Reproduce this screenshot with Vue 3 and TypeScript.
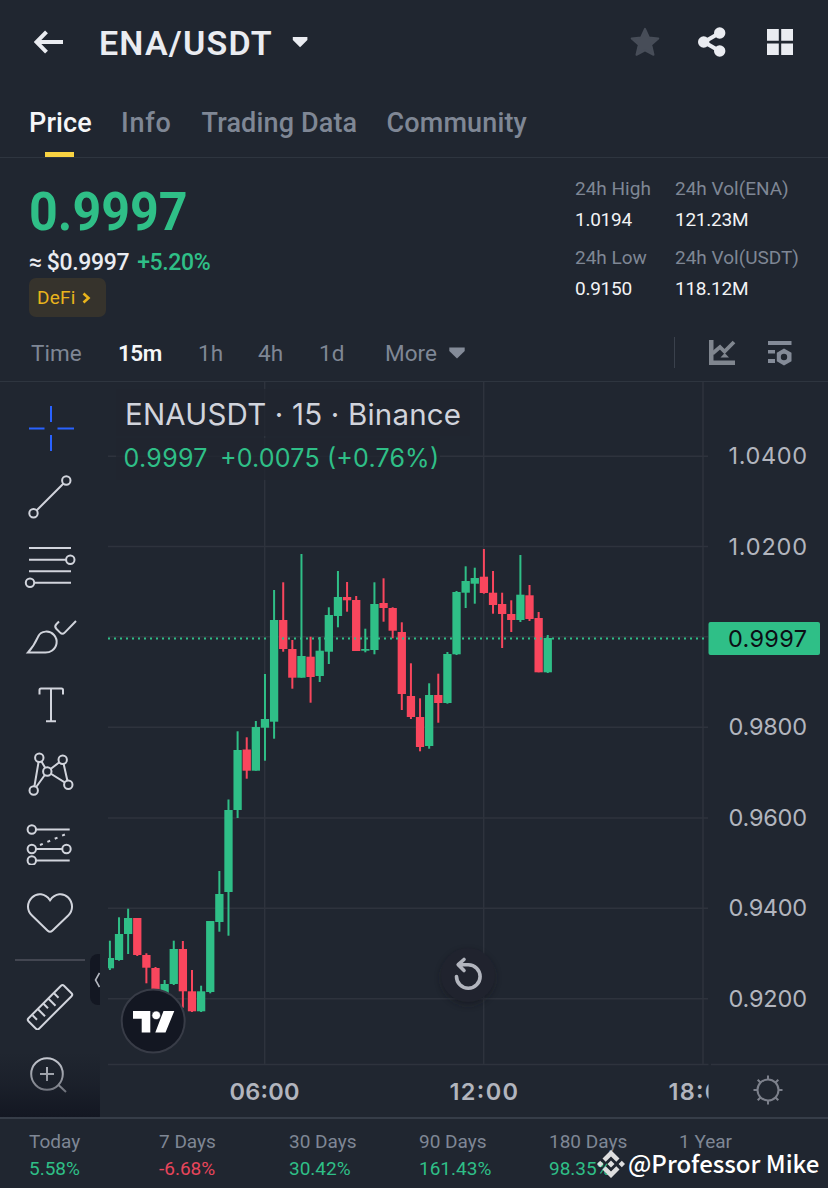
<script setup lang="ts">
type Candle = [up: number, high: number, top: number, bottom: number, low: number]

const tabs = [
  { label: 'Price', cls: 'price' },
  { label: 'Info', cls: 'info' },
  { label: 'Trading Data', cls: 'trading' },
  { label: 'Community', cls: 'community' },
]

const intervals = [
  { label: 'Time', cls: 'time' },
  { label: '15m', cls: 'm15' },
  { label: '1h', cls: 'h1' },
  { label: '4h', cls: 'h4' },
  { label: '1d', cls: 'd1' },
]

const performance = [
  { label: 'Today', value: '5.58%' },
  { label: '7 Days', value: '-6.68%' },
  { label: '30 Days', value: '30.42%' },
  { label: '90 Days', value: '161.43%' },
  { label: '180 Days', value: '98.35%' },
  { label: '1 Year', value: '--' },
]

const gridX = [264.7, 483.7, 703]
const gridY = [456.3, 546.5, 636.7, 727.3, 818, 908.3, 998.7]
const priceLabels = [
  { y: 456, text: '1.0400' },
  { y: 546.5, text: '1.0200' },
  { y: 727.3, text: '0.9800' },
  { y: 818, text: '0.9600' },
  { y: 908.3, text: '0.9400' },
  { y: 998.7, text: '0.9200' },
]

const candles: Candle[] = [
  [1, 940.7, 958, 968.3, 970],
  [1, 917.3, 934, 960, 960.7],
  [1, 908.7, 918, 934, 954],
  [0, 918, 918, 955, 956],
  [0, 953.3, 955, 967.7, 983.3],
  [0, 967, 968, 992, 994],
  [1, 980, 984, 996, 998],
  [1, 940.7, 949, 984, 985],
  [0, 941, 949, 991.3, 1007.7],
  [0, 970, 991.3, 1011.3, 1012],
  [1, 985.7, 991.3, 1011.3, 1012],
  [1, 921, 921, 992, 993.3],
  [1, 871, 894, 922, 931.7],
  [1, 799.5, 810, 892, 935.7],
  [1, 731.3, 750, 810, 818],
  [0, 737.3, 749.5, 770.7, 778.7],
  [1, 721, 727, 770.7, 770.7],
  [1, 674, 719, 727.7, 760.7],
  [1, 590, 620, 721.7, 738.7],
  [0, 582.3, 620, 649, 651.7],
  [0, 640, 649, 677.7, 688.7],
  [1, 554, 656, 677.7, 677.7],
  [0, 636.7, 656.7, 677, 702.7],
  [1, 637, 650.7, 676, 682],
  [1, 607.3, 615, 651.7, 664],
  [1, 571, 597, 616, 627.3],
  [0, 582, 597, 600.3, 611.7],
  [0, 596, 600, 651, 651],
  [1, 628.7, 649, 650.7, 652.3],
  [1, 582.3, 604, 650, 654.3],
  [0, 578.3, 603, 608, 621.7],
  [0, 607.3, 608, 630.7, 638.3],
  [0, 622.3, 632, 694, 710],
  [0, 663.3, 696, 717, 719],
  [0, 698.3, 717, 747, 751.3],
  [1, 683.3, 695, 746, 748.7],
  [0, 673.7, 695, 703, 722.7],
  [1, 652, 654, 703, 703.7],
  [1, 591, 592, 654.3, 655],
  [1, 566.3, 581, 592.7, 608],
  [1, 567.7, 578, 583.7, 603.7],
  [0, 549, 576.7, 593, 593.7],
  [0, 571, 592.7, 605, 613.7],
  [0, 592.7, 604, 614, 648],
  [0, 600.3, 614, 620, 632],
  [1, 555, 594.7, 620, 622],
  [0, 585, 595.3, 619, 621],
  [0, 612, 618, 672.3, 672.3],
  [1, 635, 638, 672.3, 673],
]

const candleX = (i: number): number => 109.9 + i * 9.122
</script>

<template>
  <div class="screen">
    <header class="header">
      <svg class="back" viewBox="0 0 30 24" width="30" height="24">
        <path d="M12.500 1.800 2.500 12l10 10.200M2.500 12H29" fill="none" stroke="#eaecf1" stroke-width="4" />
      </svg>
      <h1 class="title">ENA/USDT</h1>
      <svg class="title-caret" viewBox="0 0 16 12" width="16" height="12">
        <path d="M.8 1h14.600v3L8.100 11.200.8 4z" fill="#eaecf1" />
      </svg>
      <div class="actions">
        <svg viewBox="0 0 30 30" width="30" height="30">
          <path d="M15 1.800l3.900 8.600 9.400 1-7.100 6.300 2.300 10.100L15 23.400 6.500 27.800l2.300-10.100-7.100-6.300 9.400-1z" fill="#474d58" stroke="#474d58" stroke-width="2" stroke-linejoin="round" />
        </svg>
        <svg class="share" viewBox="0 0 30 30" width="30" height="30">
          <path d="M22.500 6 7 15l15.500 9" fill="none" stroke="#eaecf1" stroke-width="4" />
          <circle cx="22.700" cy="6" r="5.700" fill="#eaecf1" />
          <circle cx="6.700" cy="15" r="5.700" fill="#eaecf1" />
          <circle cx="22.700" cy="24" r="5.700" fill="#eaecf1" />
        </svg>
        <svg viewBox="0 0 28 28" width="28" height="28">
          <path d="M1 1h11.800v11.800H1zM15.200 1H27v11.800H15.200zM1 15.500h11.800V27H1zM15.200 15.500H27V27H15.200z" fill="#eaecf1" />
        </svg>
      </div>
    </header>

    <nav class="tabs">
      <span v-for="(t, i) in tabs" :key="t.label" class="tab" :class="[t.cls, { active: i === 0 }]">{{ t.label }}</span>
    </nav>

    <section class="ticker">
      <div class="quote">
        <div class="last">0.9997</div>
        <div class="approx"><span>≈</span><span class="usd">$0.9997</span><span class="change">+5.20%</span></div>
        <div class="tag">
          <span>DeFi</span>
          <svg viewBox="0 0 9 12" width="9" height="12"><path d="M1.500 1.500 6.500 6l-5 4.500" fill="none" stroke="#e9b41c" stroke-width="2.600" /></svg>
        </div>
      </div>
      <dl class="stats">
        <div class="stat"><dt>24h High</dt><dd>1.0194</dd></div>
        <div class="stat"><dt>24h Vol(ENA)</dt><dd>121.23M</dd></div>
        <div class="stat"><dt>24h Low</dt><dd>0.9150</dd></div>
        <div class="stat"><dt>24h Vol(USDT)</dt><dd>118.12M</dd></div>
      </dl>
    </section>

    <nav class="intervals">
      <span v-for="(t, i) in intervals" :key="t.label" class="interval" :class="[t.cls, { active: i === 1 }]">{{ t.label }}</span>
      <span class="interval more">More</span>
      <svg class="more-caret" viewBox="0 0 16 12" width="16" height="12">
        <path d="M.3.5h15.400v3.500L8 11.500.3 4z" fill="#848b98" />
      </svg>
      <i class="divider"></i>
      <svg class="ind" viewBox="0 0 28 28" width="28" height="28">
        <path d="M1 1h4.500v20.500H27V26H1z" fill="#80868f" />
        <path d="M4.500 14.500 12 8l4.500 4.500 9.500-9.500" fill="none" stroke="#80868f" stroke-width="3.800" />
        <path d="M12.500 18.500h8.500L16.700 14z" fill="#80868f" />
      </svg>
      <svg class="cfg" viewBox="0 0 26 26" width="26" height="26">
        <path d="M1 1h23.500v4H1zM1 10h7v3.500H1zM1 19h7v4H1z" fill="#848b98" />
        <path fill-rule="evenodd" d="M17 8.500l7.500 4.200v8.600L17 25.500l-7.200-4.200v-8.600zM17 13.800a3.200 3.200 0 1 0 0 6.400 3.200 3.200 0 0 0 0-6.400z" fill="#848b98" />
      </svg>
    </nav>

    <main class="chart">
      <aside class="tools">
        <svg viewBox="0 0 100 69" width="100" height="69" class="blue">
          <path d="M51 24v16M51 53v16M29 46.500h15.500M57.500 46.500H74" />
        </svg>
        <svg viewBox="0 0 100 69" width="100" height="69">
          <path d="M36.500 59.500 63.500 32.500" />
          <circle cx="33.500" cy="62.200" r="4.200" /><circle cx="66.300" cy="29.500" r="4.200" />
        </svg>
        <svg viewBox="0 0 100 69" width="100" height="69">
          <path d="M29 28h42M29 39.700h37M29 51.200h42M34 62.700h37" />
          <circle cx="70.300" cy="39.700" r="4.200" /><circle cx="30" cy="62.700" r="4.200" />
        </svg>
        <svg viewBox="0 0 100 69" width="100" height="69">
          <path d="M28 63.500C34 57 35.500 53.500 38.200 47.500 41 41.500 49.500 41 54 46c4.500 5.200 3 12.200-2.200 15.800-1.800 1.200-4 1.700-6.300 1.700z" />
          <path d="M59 32.500l-2.700 2.700c-1.200 1.300-1.200 3.300 0 4.600l3.800 3.800c1.300 1.300 3.300 1.300 4.600 0L76 32" />
        </svg>
        <svg viewBox="0 0 100 69" width="100" height="69">
          <path d="M51 31v32M46 63.300h10M39.500 36.500V32q0-1.500 1.500-1.500h20.500q1.500 0 1.500 1.500v4.500" />
        </svg>
        <svg viewBox="0 0 100 69" width="100" height="69" class="nodes">
          <path d="M39.300 30.700 33.700 63.500 47.300 44.500zM47.300 44.500 62.700 32.700 68.300 57.700z" />
          <circle cx="39.300" cy="30.700" r="4.200" /><circle cx="62.700" cy="32.700" r="4.200" /><circle cx="47.300" cy="44.500" r="4.200" /><circle cx="33.700" cy="63.500" r="4.200" /><circle cx="68.300" cy="57.700" r="4.200" />
        </svg>
        <svg viewBox="0 0 100 69" width="100" height="69">
          <path d="M36 33.500h33.700M36 53h26M36 64.500h33.700" />
          <path d="M40 49 66 38" stroke-dasharray="3 5" />
          <circle cx="31.800" cy="33.500" r="4.200" /><circle cx="31.800" cy="53" r="4.200" /><circle cx="31.800" cy="64.500" r="4.200" /><circle cx="66.500" cy="53" r="4.200" />
        </svg>
        <svg viewBox="0 0 100 69" width="100" height="69">
          <path d="M50 35.300c-5-7.300-13-7.600-18-2.800-5.500 5.500-5.200 13 0 18l15.700 15.200q2.300 2.200 4.600 0L68.200 50.500c5-5 5.200-12.500 0-18-5-4.800-13-4.500-18.200 2.800z" />
        </svg>
        <hr class="tool-line" />
        <svg viewBox="0 0 100 69" width="100" height="69">
          <path d="M61 24.700q1.500-1.500 3 0l7.500 7.500q1.500 1.500 0 3L39 67.700q-1.500 1.500-3 0L28.500 60.200q-1.500-1.500 0-3z" />
          <path d="M32.500 54.200l4.500 4.500M38 48.200l7 7M43.500 42.700l4.500 4.500M48.500 37.700l7 7M54 32.200l4.500 4.500" />
        </svg>
        <svg viewBox="0 0 100 69" width="100" height="69">
          <circle cx="47" cy="44" r="15.800" /><path d="M40 44h14M47 37v14M58.500 55l7.500 7" />
        </svg>
        <div class="fade"></div>
        <div class="collapse">
          <svg viewBox="0 0 10 16" width="10" height="16"><path d="M9.500 1 5.500 8l4 7" /></svg>
        </div>
      </aside>

      <svg class="plot" viewBox="100 382 728 735" width="728" height="735">
        <defs>
          <clipPath id="pane"><rect x="108" y="382" width="600.500" height="735" /></clipPath>
          <filter id="soft" x="-40%" y="-40%" width="180%" height="180%"><feGaussianBlur stdDeviation="3" /></filter>
        </defs>
        <g class="grid">
          <path v-for="x in gridX" :key="x" :d="`M${x} 382V1064`" />
          <path v-for="y in gridY" :key="y" :d="`M108 ${y}H708`" />
          <path d="M108 1064.500H708.500M711 1064.500H828" />
        </g>
        <rect x="116" y="389" width="354" height="47" class="legend-bg" />
        <rect x="116" y="438" width="324" height="42" class="legend-bg" />
        <g clip-path="url(#pane)">
          <g v-for="(c, i) in candles" :key="i" :class="c[0] ? 'up' : 'down'">
            <rect :x="candleX(i) - 1" :y="c[1]" width="2" :height="c[4] - c[1]" />
            <rect :x="candleX(i) - 4.150" :y="c[2]" width="8.300" :height="c[3] - c[2]" />
          </g>
          <path class="last-line" d="M108 638.500H708" />
        </g>
        <text class="sym" x="125" y="425" textLength="336">ENAUSDT · 15 · Binance</text>
        <text class="chg" x="123.500" y="466.500" textLength="84">0.9997</text>
        <text class="chg" x="220" y="466.500" textLength="219">+0.0075 (+0.76%)</text>

        <text v-for="p in priceLabels" :key="p.text" class="axis" x="728.500" :y="p.y + 8" textLength="78.500">{{ p.text }}</text>
        <rect x="708.500" y="622" width="111.500" height="33" rx="2" class="tag-bg" />
        <text class="axis dark" x="728" y="647" textLength="79">0.9997</text>

        <g clip-path="url(#pane)">
          <text class="hour" x="229.500" y="1100" textLength="70">06:00</text>
          <text class="hour" x="449.500" y="1100" textLength="68.500">12:00</text>
          <text class="hour" x="668.500" y="1100" textLength="68.500">18:00</text>
        </g>

        <g class="sun">
          <circle cx="768" cy="1090" r="10.500" />
          <path d="M768 1075.500v4M768 1100.500v4M753.500 1090h4M778.500 1090h4M757.700 1079.700l3 3M775.300 1097.300l3 3M757.700 1100.300l3-3M775.300 1082.700l3-3" />
        </g>

        <circle cx="468" cy="978" r="27" fill="#12151d" opacity=".5" filter="url(#soft)" />
        <circle cx="468" cy="975" r="27" fill="#20232e" />
        <path class="reset" d="M456.500 976.500a11.800 11.800 0 1 0 11.800-11.800h-9M464 959.500l-5.800 5.200 5.800 5.800" />

        <circle cx="153.200" cy="1021" r="31.500" fill="#131722" stroke="#383c47" stroke-width="2" />
        <path d="M133 1011h17.300v21.500h-8.600v-13.700H133zM163.500 1011h10.800l-8.800 21.500h-10.200z" fill="#fff" />
        <circle cx="156.200" cy="1015.300" r="4.300" fill="#fff" stroke="#131722" stroke-width=".6" />
      </svg>
    </main>

    <footer class="perf">
      <div v-for="p in performance" :key="p.label" class="perf-item">
        <span class="perf-label">{{ p.label }}</span>
        <span class="perf-value" :class="{ neg: p.value.startsWith('-6'), none: p.value === '--' }">{{ p.value }}</span>
      </div>
    </footer>

    <div class="credit">
      <svg viewBox="0 0 28 28" width="28" height="28">
        <path d="M14 0l8.500 8.500-3.200 3.200L14 6.400l-5.300 5.300-3.200-3.200zM3.200 10.800 6.400 14l-3.200 3.200L0 14zM24.800 10.800 28 14l-3.200 3.200-3.200-3.200zM14 10.500l3.500 3.500-3.500 3.500-3.500-3.500zM14 28l-8.500-8.500 3.200-3.200L14 21.600l5.300-5.300 3.200 3.200z" fill="#dedede" />
      </svg>
      <span>@Professor Mike</span>
    </div>
  </div>
</template>

<style>
html,
body {
  background: #202630;
}
</style>

<style scoped>
.screen {
  position: relative;
  width: 828px;
  height: 1188px;
  overflow: hidden;
  background: #202630;
  color: #eaecf1;
  font-family: Roboto, 'Liberation Sans', sans-serif;
  white-space: nowrap;
}
.screen svg {
  display: block;
  flex: none;
}
.header {
  height: 87px;
  display: flex;
  align-items: center;
  padding: 0 34px 2px 34px;
  box-sizing: border-box;
}
.back {
  margin-top: -1px;
}
.title {
  margin: 0 0 0 35px;
  width: 174px;
  font-size: 34px;
  font-weight: 600;
  letter-spacing: 1.2px;
}
.title-caret {
  margin: -2px 0 0 18.500px;
}
.actions {
  margin: -1px 0 0 auto;
  display: flex;
  align-items: center;
  gap: 36.500px;
}
.share {
  margin-right: 3px;
}
.tabs {
  height: 71px;
  box-sizing: border-box;
  border-bottom: 1px solid #2e353f;
  display: flex;
  padding-left: 29px;
  gap: 30px;
  line-height: 72px;
  font-size: 27px;
  font-weight: 500;
  color: #7f8795;
}
.tab {
  position: relative;
  letter-spacing: 0.15px;
}
.tab.active {
  color: #f5f6f8;
}
.tab.active::after {
  content: '';
  position: absolute;
  left: 16px;
  bottom: 0;
  width: 29px;
  height: 5px;
  background: #f9d342;
}
.price { width: 62px; }
.info { width: 50.500px; }
.tab.info { letter-spacing: 0.8px; }
.trading { width: 155px; }
.ticker {
  height: 168px;
  display: flex;
  justify-content: space-between;
  box-sizing: border-box;
  padding: 15px 29px 0 29px;
}
.quote {
  padding-top: 9px;
}
.last {
  font-size: 54px;
  line-height: 60px;
  font-weight: 700;
  color: #2fbf87;
  transform: scaleX(0.93);
  transform-origin: 0 50%;
}
.approx {
  display: flex;
  margin-top: 5px;
  line-height: 31px;
  font-size: 23px;
  font-weight: 500;
  letter-spacing: -0.350px;
}
.usd {
  margin-left: 5px;
}
.change {
  margin-left: 8px;
  color: #2fbf87;
}
.tag {
  width: 77px;
  height: 39px;
  box-sizing: border-box;
  padding-left: 8px;
  display: flex;
  align-items: center;
  gap: 7px;
  border-radius: 7px;
  background: #36332c;
  color: #e9b41c;
  font-size: 19px;
  letter-spacing: 0.200px;
}
.stats {
  margin: 0;
  display: grid;
  grid-template-columns: 100px 124px;
  align-content: start;
  row-gap: 7px;
  font-size: 19px;
  line-height: 31px;
}
.stat dt {
  color: #7f8795;
}
.stat dd {
  margin: 0;
  color: #f2f3f5;
  letter-spacing: -0.250px;
}
.intervals {
  height: 56px;
  box-sizing: border-box;
  border-bottom: 1px solid #2e353f;
  display: flex;
  align-items: center;
  padding: 0 0 2px 31px;
  font-size: 22.500px;
  color: #7f8795;
}
.interval.active {
  color: #f5f6f8;
  font-weight: 600;
  letter-spacing: -0.500px;
}
.time { width: 87px; }
.m15 { width: 80px; }
.h1 { width: 60px; }
.h4 { width: 61px; }
.d1 { width: 66px; }
.more { width: 64px; }
.divider {
  width: 1px;
  height: 31px;
  margin-left: 209px;
  background: #3a414c;
}
.ind {
  margin-left: 33px;
}
.cfg {
  margin-left: 31px;
}
.chart {
  height: 735px;
  display: flex;
  border-bottom: 2px solid #363d48;
}
.tools {
  position: relative;
  width: 100px;
  display: flex;
  flex-direction: column;
}
.tools > svg {
  fill: none;
  stroke: #d1d4dc;
  stroke-width: 2;
}
.tools > svg.blue {
  stroke: #2962ff;
}
.nodes circle {
  fill: #202630;
}
.tool-line {
  margin: 25px 15px 0 15px;
  border: 0;
  height: 2px;
  background: #434651;
}
.fade {
  position: absolute;
  left: 0;
  bottom: 0;
  width: 100px;
  height: 64px;
  background: linear-gradient(rgba(19, 23, 34, 0), rgba(19, 23, 34, 0.400) 50%, #131722);
}
.collapse {
  position: absolute;
  left: 90px;
  top: 572px;
  width: 10px;
  height: 51px;
  border-radius: 8px 0 0 8px;
  background: #131722;
  display: flex;
  align-items: center;
}
.collapse path {
  fill: none;
  stroke: #b2b5be;
  stroke-width: 1.600;
}
.plot {
  font-family: Inter, 'Liberation Sans', sans-serif;
}
.grid path {
  fill: none;
  stroke: #2e333d;
  stroke-width: 1.500;
}
.legend-bg {
  fill: #202630;
  opacity: 0.8;
}
.up { fill: #2fbf87; }
.down { fill: #f9465d; }
.last-line {
  fill: none;
  stroke: #2fbf87;
  stroke-width: 2;
  stroke-dasharray: 2 4;
}
.sym {
  font-size: 29.500px;
  fill: #d1d4dc;
}
.chg {
  font-size: 25px;
  fill: #2fbf87;
}
.axis {
  font-size: 23.500px;
  fill: #b2b5be;
}
.axis.dark {
  fill: #0c0e15;
}
.tag-bg {
  fill: #2fbf87;
}
.hour {
  font-size: 23.500px;
  font-weight: 600;
  fill: #b2b5be;
}
.sun {
  fill: none;
  stroke: #7c808b;
  stroke-width: 2;
}
.reset {
  fill: none;
  stroke: #b2b5be;
  stroke-width: 3.600;
  stroke-linecap: round;
  stroke-linejoin: round;
}
.perf {
  height: 69px;
  box-sizing: border-box;
  padding: 9px 0 0 29px;
  display: flex;
}
.perf-item {
  width: 130px;
  display: flex;
  flex-direction: column;
  font-size: 19px;
  line-height: 27px;
}
.perf-label {
  color: #7f8795;
}
.perf-value {
  color: #2fbf87;
}
.perf-value.neg {
  color: #e8455b;
}
.perf-value.none {
  color: #7f8795;
}
.credit {
  position: absolute;
  left: 597px;
  top: 1147px;
  height: 34px;
  display: flex;
  align-items: center;
  gap: 3px;
  color: #fff;
  font: 500 24px/32px 'Noto Sans CJK SC', 'Noto Sans', sans-serif;
}
.credit span {
  margin-top: -2px;
}
</style>
